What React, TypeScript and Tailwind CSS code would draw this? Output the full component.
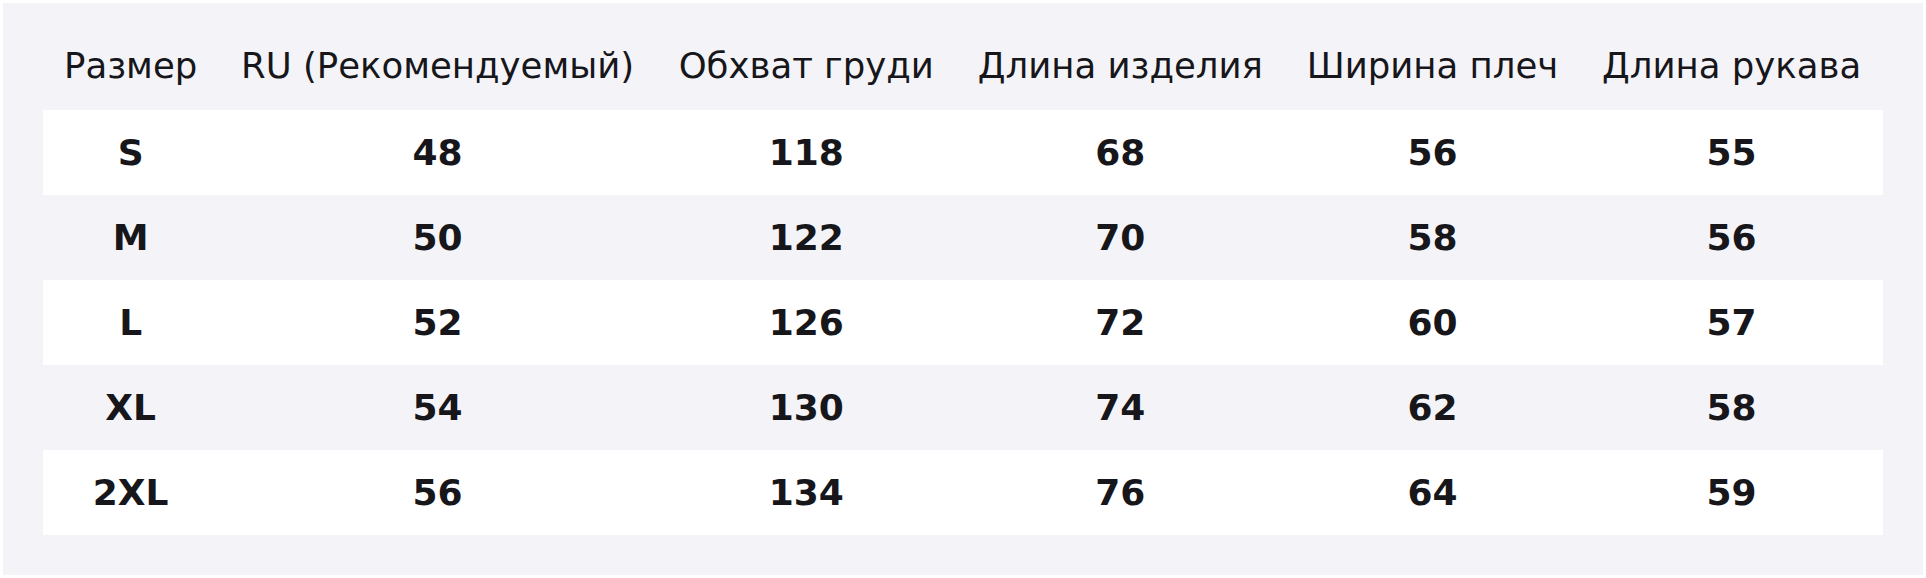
import React from "react";

const headers = [
  "Размер",
  "RU (Рекомендуемый)",
  "Обхват груди",
  "Длина изделия",
  "Ширина плеч",
  "Длина рукава",
];

const rows = [
  ["S", "48", "118", "68", "56", "55"],
  ["M", "50", "122", "70", "58", "56"],
  ["L", "52", "126", "72", "60", "57"],
  ["XL", "54", "130", "74", "62", "58"],
  ["2XL", "56", "134", "76", "64", "59"],
];

export default function App() {
  return (
    <div className="bg-white p-[3px]" style={{ fontFamily: '"DejaVu Sans", Verdana, sans-serif' }}>
      <div className="bg-[#f4f4f8] px-10 pt-10 pb-10 text-[#16161b]">
        <table className="w-full border-collapse table-auto">
          <thead>
            <tr>
              {headers.map((h) => (
                <th
                  key={h}
                  className="px-[20px] pt-[2px] pb-[23px] text-[35.5px] leading-[42px] font-normal text-center whitespace-nowrap"
                >
                  {h}
                </th>
              ))}
            </tr>
          </thead>
          <tbody>
            {rows.map((r, i) => (
              <tr key={r[0]} className={i % 2 === 0 ? "bg-white" : ""}>
                {r.map((c, j) => (
                  <td
                    key={j}
                    className="h-[85px] px-[20px] py-0 text-[36px] leading-[42px] font-bold text-center align-middle whitespace-nowrap"
                  >
                    {c}
                  </td>
                ))}
              </tr>
            ))}
          </tbody>
        </table>
      </div>
    </div>
  );
}
